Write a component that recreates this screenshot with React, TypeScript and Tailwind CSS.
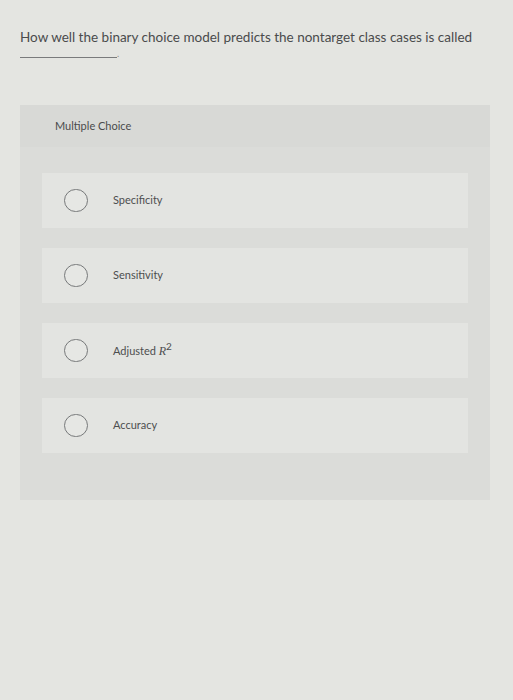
import * as React from "react";

const options = [
  { id: "a", label: "Specificity" },
  { id: "b", label: "Sensitivity" },
  { id: "c", label: "Adjusted", math: "R", sup: "2" },
  { id: "d", label: "Accuracy" },
];

function Radio() {
  return (
    <span className="block w-[24px] h-[23px] rounded-full border-[1.5px] border-[#77797a] bg-[#e6e7e4]" />
  );
}

export default function App() {
  return (
    <div
      className="min-h-[700px] w-full bg-[#e4e5e1] text-[#4b4c4d]"
      style={{ fontFamily: "Lato, 'Open Sans', sans-serif" }}
    >
      <div className="px-[20px] pt-[28px]">
        <p className="text-[13.5px] leading-[18px] text-[#4a4b4c]">
          How well the binary choice model predicts the nontarget class cases is called
        </p>
        <div className="flex items-end h-[12px]">
          <span className="block w-[97px] border-b border-[#7a7b7c]" />
          <span className="text-[9px] leading-none text-[#888]">.</span>
        </div>
      </div>

      <div className="mx-[20px] mt-[47px] w-[470px] bg-[#dbdcd9]">
        <div className="h-[42px] flex items-center pl-[35px] bg-[#d8d9d6] text-[11px] text-[#4a4b4c]">
          Multiple Choice
        </div>
        <div className="flex flex-col gap-[20px] px-[22px] pt-[26px] pb-[47px]">
          {options.map((o) => (
            <label
              key={o.id}
              className="h-[55px] flex items-center bg-[#e3e4e1] pl-[22px]"
            >
              <Radio />
              <span className="ml-[25px] text-[11px] text-[#4d4e4f]">
                {o.label}
                {o.math && (
                  <>
                    {" "}
                    <span className="italic text-[12px]" style={{ fontFamily: "'Liberation Serif', serif" }}>
                      {o.math}
                    </span>
                    <sup className="text-[10px]">{o.sup}</sup>
                  </>
                )}
              </span>
            </label>
          ))}
        </div>
      </div>
    </div>
  );
}
